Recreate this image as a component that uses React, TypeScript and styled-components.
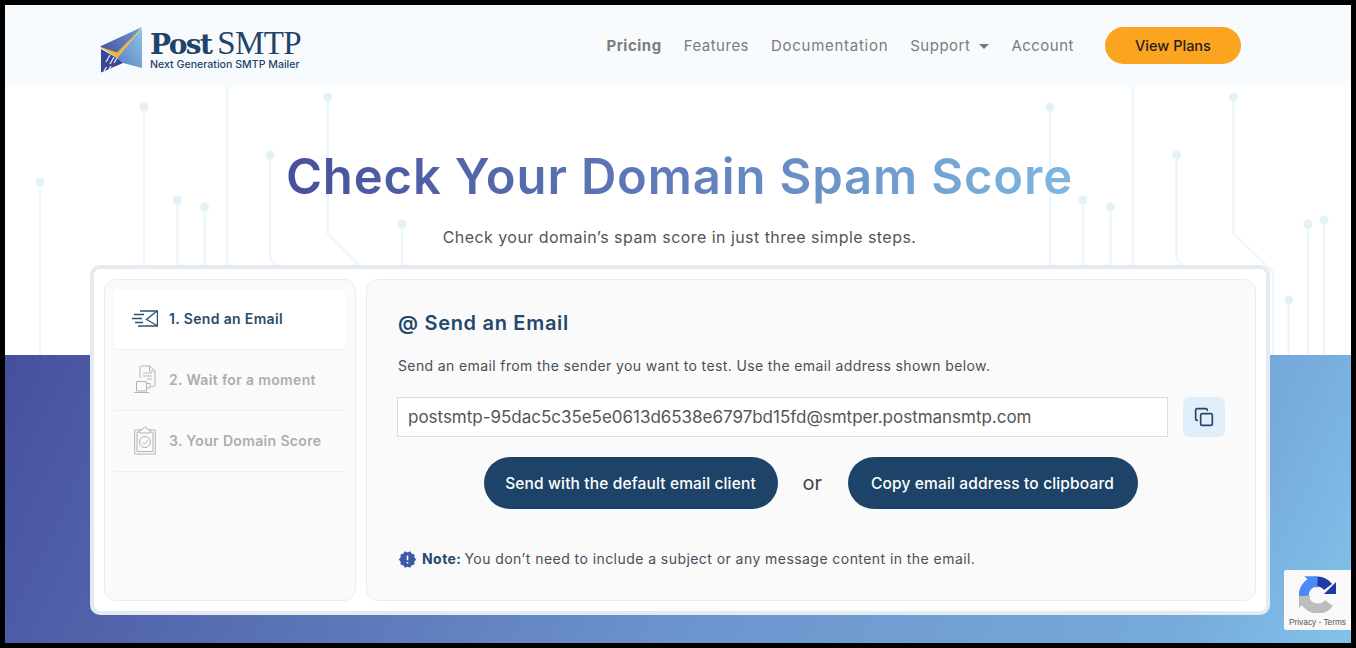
import { Copy } from "lucide-react";
import { MdNewReleases } from "react-icons/md";
import styled, { createGlobalStyle } from "styled-components";

const GlobalStyle = createGlobalStyle`
  * {
    box-sizing: border-box;
  }
  html, body {
    margin: 0;
    background: #000;
  }
  body {
    font-family: Inter, "Open Sans", sans-serif;
    color: #444;
  }
`;

const Frame = styled.div`
  height: 648px;
  border: 5px solid #000;
  display: flex;
  flex-direction: column;
  overflow: hidden;
  position: relative;
`;

const Header = styled.header`
  height: 82px;
  flex: none;
  display: flex;
  align-items: center;
  justify-content: space-between;
  padding: 0 110px 2px 95px;
  background: #f8fbfe;
`;

const Logo = styled.div`
  display: flex;
  align-items: center;
  gap: 7px;
  margin-top: 10px;
`;

const LogoText = styled.div`
  display: flex;
  flex-direction: column;
  color: #1f4468;
`;

const LogoName = styled.div`
  font-family: "DejaVu Serif", serif;
  font-size: 28px;
  line-height: 29px;
  font-weight: 700;
  letter-spacing: -1.6px;
  white-space: nowrap;

  span {
    font-family: "Liberation Serif", serif;
    font-weight: 400;
    font-size: 33px;
    letter-spacing: -0.6px;
    margin-left: 6px;
  }
`;

const LogoTag = styled.div`
  font-size: 10.6px;
  line-height: 12px;
  font-weight: 500;
  white-space: nowrap;
`;

const Nav = styled.nav`
  display: flex;
  align-items: center;
  gap: 22px;
`;

const NavLink = styled.a<{ $strong?: boolean; $tracking?: number }>`
  display: flex;
  align-items: center;
  gap: 9px;
  font-size: 15px;
  letter-spacing: ${(props) => props.$tracking ?? 0.5}px;
  font-weight: ${(props) => (props.$strong ? 700 : 400)};
  color: #7c7c7c;
`;

const Caret = styled.i`
  width: 0;
  height: 0;
  border-left: 5px solid transparent;
  border-right: 5px solid transparent;
  border-top: 5px solid #777;
  margin-top: 2px;
`;

const PlansButton = styled.a`
  width: 136px;
  height: 37px;
  margin-left: 9px;
  display: flex;
  align-items: center;
  justify-content: center;
  border-radius: 19px;
  background: #fba41f;
  color: #1e1e1e;
  font-size: 14.5px;
  font-weight: 500;
`;

const Main = styled.main`
  flex: 1;
  position: relative;
  isolation: isolate;
  background:
    linear-gradient(115deg, #45509c 0%, #4d5ba6 8.5%, #6c94cc 54%, #76aadc 87.7%, #82c3ea 100%) bottom / 100% 288px no-repeat,
    #fff;
`;

const Circuit = styled.svg`
  position: absolute;
  inset: 0;
  z-index: -1;
`;

const Title = styled.h1`
  margin: 0 auto;
  padding: 62px 0 0 3px;
  width: 800px;
  text-align: center;
  font-size: 49px;
  line-height: 56px;
  font-weight: 600;
  letter-spacing: 0.85px;
  white-space: nowrap;
  color: transparent;
  background: linear-gradient(90deg, #45509b 0%, #5d78b6 45%, #7fb8e1 100%);
  background-clip: text;
  -webkit-background-clip: text;
`;

const Subtitle = styled.p`
  margin: 20px 0 16px;
  padding-left: 3px;
  text-align: center;
  font-size: 16px;
  line-height: 24px;
  letter-spacing: 0.45px;
  color: #555;
`;

const Card = styled.section`
  margin: 0 81px 0 85px;
  height: 350px;
  padding: 10px;
  display: flex;
  gap: 10px;
  background: #fff;
  border: 4px solid #e5e9f0;
  border-radius: 10px;
`;

const Sidebar = styled.aside`
  width: 252px;
  flex: none;
  padding: 10px 10px 0 9px;
  background: #fafafa;
  border: 1px solid #ececec;
  border-radius: 12px;
`;

const Step = styled.div<{ $active?: boolean }>`
  height: ${(props) => (props.$active ? 60 : 61)}px;
  display: flex;
  align-items: center;
  gap: 11px;
  padding: 0 0 2px 18px;
  font-size: 14px;
  font-weight: 600;
  letter-spacing: 0.35px;
  color: ${(props) => (props.$active ? "#2b4a69" : "#adadad")};
  background: ${(props) => (props.$active ? "#fff" : "transparent")};
  border-bottom: 1px solid ${(props) => (props.$active ? "#f4f4f4" : "#efefef")};
`;

const StepIcon = styled.span`
  width: 26px;
  display: flex;
  justify-content: center;
`;

const Panel = styled.div`
  flex: 1;
  padding: 30px 30px 0 31px;
  background: #fafafa;
  border: 1px solid #ececec;
  border-radius: 12px;
`;

const PanelTitle = styled.h2`
  margin: 0;
  font-size: 20px;
  line-height: 26px;
  font-weight: 600;
  letter-spacing: 0.7px;
  color: #24486b;
`;

const PanelText = styled.p`
  margin: 19px 0 0;
  font-size: 14px;
  line-height: 22px;
  letter-spacing: 0.38px;
  color: #4a4f57;
`;

const AddressRow = styled.div`
  margin: 20px 0 0 -1px;
  display: flex;
  gap: 15px;
`;

const Address = styled.div`
  flex: 1;
  height: 40px;
  display: flex;
  align-items: center;
  padding-left: 10px;
  background: #fff;
  border: 1px solid #dcdcdc;
  font-size: 17px;
  letter-spacing: -0.02px;
  color: #555;
`;

const CopyButton = styled.button`
  all: unset;
  width: 42px;
  height: 40px;
  display: flex;
  align-items: center;
  justify-content: center;
  background: #e1effb;
  border-radius: 6px;
  color: #24486b;
`;

const Actions = styled.div`
  margin-top: 20px;
  display: flex;
  align-items: center;
  justify-content: center;
  gap: 25px;
  padding-right: 2px;
`;

const ActionButton = styled.a<{ $width: number }>`
  width: ${(props) => props.$width}px;
  height: 52px;
  display: flex;
  align-items: center;
  justify-content: center;
  background: #1d4468;
  border-radius: 26px;
  color: #fff;
  font-size: 15.5px;
  font-weight: 500;
  letter-spacing: 0.15px;
`;

const Or = styled.span`
  width: 20px;
  font-size: 20px;
  color: #444;
`;

const Note = styled.p`
  margin: 39px 0 0;
  display: flex;
  align-items: center;
  gap: 5px;
  font-size: 14px;
  line-height: 22px;
  letter-spacing: 0.44px;
  color: #4a4f57;

  svg {
    color: #3d56a8;
  }

  b {
    font-weight: 700;
    color: #24486b;
    margin-right: 3px;
  }
`;

const Recaptcha = styled.div`
  position: absolute;
  right: 0;
  bottom: 13px;
  width: 67px;
  height: 60px;
  display: flex;
  flex-direction: column;
  align-items: center;
  padding-top: 5px;
  background: #f9f9f9;
  border-radius: 2px 0 0 2px;
  font-family: "Liberation Sans", sans-serif;
  font-size: 8.3px;
  line-height: 10px;
  color: #555;
  white-space: nowrap;

  svg {
    margin: 0 0 4px 0;
  }
`;

// [x, y of the dot, y where the line stops behind the card]
const traces = [
  [40, 182, 355],
  [144, 107, 265],
  [177.5, 200, 265],
  [204.5, 207, 265],
  [402, 224, 265],
  [1050, 107, 265],
  [1083, 200, 265],
  [1110.5, 207, 265],
  [1288.7, 300, 355],
  [1307.7, 224, 355],
  [1324, 220, 355],
];

const bentTraces = [
  "M270 155V259L277 266",
  "M327.7 97V233L360 266",
  "M1176.5 155V258L1184 266",
  "M1233.5 97V233L1273 272V355",
  "M227 87V266",
  "M1133 87V266",
];

const bentDots = [
  [270, 155],
  [327.7, 97],
  [1176.5, 155],
  [1233.5, 97],
];

const CircuitLines = () => (
  <Circuit width="1346" height="556" viewBox="5 87 1346 556" fill="none">
    {traces.map(([x, y, end]) => (
      <g key={x}>
        <path d={`M${x} ${y}V${end}`} stroke="#edf7fb" strokeWidth="2.4" />
        <circle cx={x} cy={y} r="4.5" fill="#e4f2f8" />
      </g>
    ))}
    {bentTraces.map((d) => (
      <path key={d} d={d} stroke="#edf7fb" strokeWidth="2.4" />
    ))}
    {bentDots.map(([x, y]) => (
      <circle key={x} cx={x} cy={y} r="4.5" fill="#e4f2f8" />
    ))}
  </Circuit>
);

const PlaneLogo = () => (
  <svg width="43" height="46" viewBox="0 0 43 46">
    <defs>
      <linearGradient id="wing" x1="0" y1="0.6" x2="1" y2="0.2">
        <stop offset="0" stopColor="#47569f" />
        <stop offset="1" stopColor="#6f9ad2" />
      </linearGradient>
      <linearGradient id="body" x1="0" y1="1" x2="1" y2="0">
        <stop offset="0" stopColor="#5a80c2" />
        <stop offset="1" stopColor="#8fc4ea" />
      </linearGradient>
    </defs>
    <path d="M42 0L0 19.5L17 30Z" fill="url(#wing)" />
    <path d="M17 31L42 1V41L23 36Z" fill="url(#body)" />
    <path d="M1 22L17 31L23 36L1 45.5Z" fill="#3a4595" />
    <path d="M1 20L17 25.5L42 0.5L17 31Z" fill="#f0b437" />
    <path d="M6 35L10 28M10 37L14 30M14 36L17 31M4 44L6.5 40M9 42L11 39" stroke="#e4ecf8" strokeWidth="1.3" />
  </svg>
);

const EmailIcon = () => (
  <svg width="26" height="17" viewBox="0 0 26 17" fill="none" stroke="#2f5272" strokeWidth="1.3">
    <path d="M8 1H25.4V16H6" />
    <path d="M25 1L14.5 9.5L25 15.5" />
    <path d="M2 4.5H12M0 8.5H10M3 12.5H11" />
  </svg>
);

const WaitIcon = () => (
  <svg width="22" height="28" viewBox="0 0 22 28" fill="none" stroke="#b4b4b4" strokeWidth="1">
    <path d="M6 13V2.5Q6 1 7.5 1H15.5L21 6V20Q21 21.5 19.5 21.5H17" />
    <path d="M15.5 1V6H21M9 8H18M9 11H18M13 14H18" />
    <path d="M2.5 16.5H12.5V26H2.5ZM12.5 18.5H16V23H12.5M0 27.5H15" />
  </svg>
);

const ScoreIcon = () => (
  <svg width="22" height="29" viewBox="0 0 22 29" fill="none" stroke="#b4b4b4" strokeWidth="1">
    <path d="M6 4H0.7V28H21.3V4H16" />
    <path d="M6 6H3V25.5H19V6H16" />
    <path d="M6 7V3.5H8.5Q9 1 11 1Q13 1 13.5 3.5H16V7Z" />
    <circle cx="11" cy="16" r="5.5" />
    <path d="M8.5 16L10.5 18L14 14" />
  </svg>
);

const RecaptchaLogo = () => (
  <svg width="38" height="38" viewBox="0 0 38 38" fill="none">
    <path d="M30 28A14 14 0 0 1 18.3 33.5A13.5 13.5 0 0 1 4.8 20" stroke="#bdbdbd" strokeWidth="10" />
    <path d="M0 33V21H12Z" fill="#bdbdbd" />
    <path d="M4.8 21A13.5 13.5 0 0 1 18.3 6.5" stroke="#4a8af4" strokeWidth="10" />
    <path d="M5.3 1.3H18.3V13.3Z" fill="#4a8af4" />
    <path d="M18.3 6.5A13.5 13.5 0 0 1 29 12" stroke="#1c3aa9" strokeWidth="10" />
    <path d="M37 7V19H25Z" fill="#1c3aa9" />
  </svg>
);

const App = () => (
  <>
    <GlobalStyle />
    <Frame>
      <Header>
        <Logo>
          <PlaneLogo />
          <LogoText>
            <LogoName>
              Post<span>SMTP</span>
            </LogoName>
            <LogoTag>Next Generation SMTP Mailer</LogoTag>
          </LogoText>
        </Logo>
        <Nav>
          <NavLink $strong>Pricing</NavLink>
          <NavLink>Features</NavLink>
          <NavLink $tracking={0.72}>Documentation</NavLink>
          <NavLink>
            Support <Caret />
          </NavLink>
          <NavLink>Account</NavLink>
          <PlansButton>View Plans</PlansButton>
        </Nav>
      </Header>
      <Main>
        <CircuitLines />
        <Title>Check Your Domain Spam Score</Title>
        <Subtitle>Check your domain’s spam score in just three simple steps.</Subtitle>
        <Card>
          <Sidebar>
            <Step $active>
              <StepIcon>
                <EmailIcon />
              </StepIcon>
              1. Send an Email
            </Step>
            <Step>
              <StepIcon>
                <WaitIcon />
              </StepIcon>
              2. Wait for a moment
            </Step>
            <Step>
              <StepIcon>
                <ScoreIcon />
              </StepIcon>
              3. Your Domain Score
            </Step>
          </Sidebar>
          <Panel>
            <PanelTitle>@ Send an Email</PanelTitle>
            <PanelText>
              Send an email from the sender you want to test. Use the email address shown below.
            </PanelText>
            <AddressRow>
              <Address>postsmtp-95dac5c35e5e0613d6538e6797bd15fd@smtper.postmansmtp.com</Address>
              <CopyButton>
                <Copy size={20} strokeWidth={2} />
              </CopyButton>
            </AddressRow>
            <Actions>
              <ActionButton $width={294}>Send with the default email client</ActionButton>
              <Or>or</Or>
              <ActionButton $width={290}>Copy email address to clipboard</ActionButton>
            </Actions>
            <Note>
              <MdNewReleases size={19} />
              <span>
                <b>Note:</b>You don’t need to include a subject or any message content in the email.
              </span>
            </Note>
          </Panel>
        </Card>
      </Main>
      <Recaptcha>
        <RecaptchaLogo />
        Privacy - Terms
      </Recaptcha>
    </Frame>
  </>
);

export default App;
